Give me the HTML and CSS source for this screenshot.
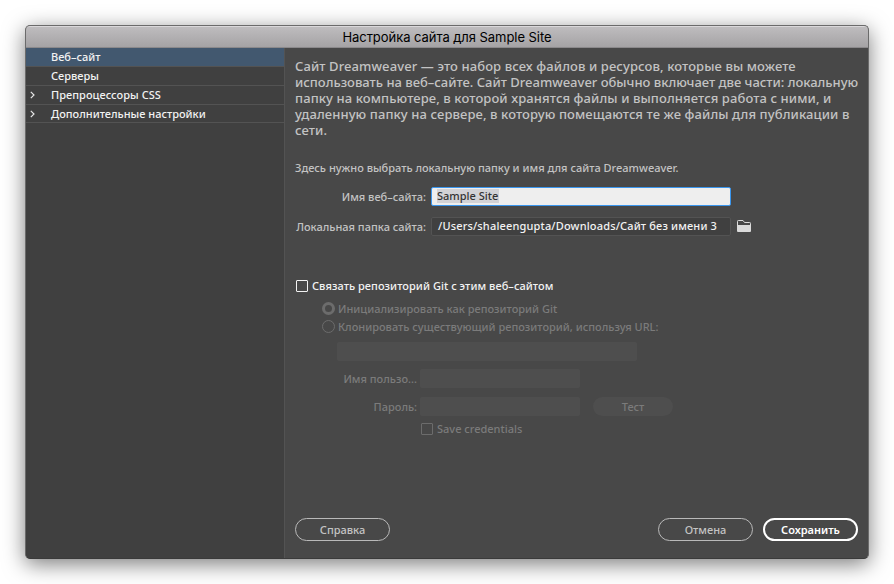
FILE: index.html
```html
<!DOCTYPE html>
<html lang="ru">
<head>
  <meta charset="UTF-8">
  <title>Настройка сайта для Sample Site</title>
  <link rel="stylesheet" href="styles.css">
</head>
<body>
  <div class="window">
    <div class="titlebar"><span class="title">Настройка сайта для Sample Site</span></div>
    <div class="content">
      <ul class="sidebar">
        <li class="active"><span class="arrow"></span><span>Веб–сайт</span></li>
        <li><span class="arrow"></span><span>Серверы</span></li>
        <li>
          <span class="arrow"><svg width="5" height="8" viewBox="0 0 5 8"><path d="M0.8 0.8L4 4L0.8 7.2"/></svg></span>
          <span class="nav-css">Препроцессоры CSS</span>
        </li>
        <li class="last">
          <span class="arrow"><svg width="5" height="8" viewBox="0 0 5 8"><path d="M0.8 0.8L4 4L0.8 7.2"/></svg></span>
          <span>Дополнительные настройки</span>
        </li>
      </ul>
      <div class="main">
        <p class="intro">Сайт Dreamweaver — это набор всех файлов и ресурсов, которые вы можете<br><span class="tight">использовать на веб–сайте. Сайт Dreamweaver обычно включает две части: локальную</span><br>папку на компьютере, в которой хранятся файлы и выполняется работа с ними, и<br>удаленную папку на сервере, в которую помещаются те же файлы для публикации в<br>сети.</p>
        <p class="hint">Здесь нужно выбрать локальную папку и имя для сайта Dreamweaver.</p>

        <div class="row site-name">
          <label>Имя веб–сайта:</label>
          <div class="field focused"><span class="selection">Sample Site</span></div>
        </div>
        <div class="row site-folder">
          <label>Локальная папка сайта:</label>
          <div class="field path"><span>/Users/shaleengupta/Downloads/Сайт без имени 3</span></div>
          <svg class="folder" width="14" height="12" viewBox="0 0 14 12">
            <path class="folder-back" d="M0.5 5V1.3Q0.5 0.5 1.3 0.5H6L7.5 2.5H12.7Q13.5 2.5 13.5 3.3V5"/>
            <path class="folder-front" d="M0 5H14V11Q14 12 13 12H1Q0 12 0 11Z"/>
          </svg>
        </div>

        <div class="git-check"><span class="checkbox"></span><span class="label">Связать репозиторий Git с этим веб–сайтом</span></div>

        <div class="git">
          <div class="radio-row"><span class="radio checked"></span><span class="label">Инициализировать как репозиторий Git</span></div>
          <div class="radio-row"><span class="radio"></span><span class="label">Клонировать существующий репозиторий, используя URL:</span></div>
          <div class="field url"></div>
          <div class="row user">
            <label>Имя пользо...</label>
            <div class="field short"></div>
          </div>
          <div class="row password">
            <label>Пароль:</label>
            <div class="field short"></div>
            <div class="test">Тест</div>
          </div>
          <div class="save-check"><span class="checkbox"></span><span class="label">Save credentials</span></div>
        </div>

        <div class="footer">
          <button class="help">Справка</button>
          <button class="cancel">Отмена</button>
          <button class="save">Сохранить</button>
        </div>
      </div>
    </div>
  </div>
</body>
</html>
```
FILE: styles.css
```css
* {
  box-sizing: border-box;
}

body {
  margin: 0;
  padding: 25px;
  height: 584px;
  overflow: hidden;
  background: #fff;
  font-family: 'Noto Sans', 'Open Sans', sans-serif;
  font-size: 11px;
  font-weight: 500;
  white-space: nowrap;
}

.window {
  display: flex;
  flex-direction: column;
  width: 844px;
  height: 534px;
  border: 1px solid #6b6b6b;
  border-bottom-color: #3a3a3a;
  border-radius: 5px;
  overflow: hidden;
  background: #484848;
  box-shadow: 0 5px 21px rgba(0, 0, 0, 0.52);
}

.titlebar {
  height: 22px;
  flex: none;
  border-top: 1px solid #dad8da;
  border-bottom: 1px solid #8b898b;
  background: linear-gradient(#bebcbe, #a5a3a5);
  text-align: center;
  color: #000;
  font: 13px/21px Inter, Roboto, sans-serif;
  letter-spacing: -0.05px;
}

.content {
  display: flex;
  flex: 1;
}

/* sidebar */
.sidebar {
  width: 259px;
  flex: none;
  margin: 0;
  padding: 0;
  list-style: none;
  background: #404040;
  border-right: 1px solid #535353;
  color: #f2f2f2;
}

.sidebar li {
  display: flex;
  align-items: center;
  height: 19px;
  padding-bottom: 1px;
  border-bottom: 1px solid #535353;
}

.sidebar li.last {
  height: 18px;
  padding-bottom: 0;
}

.sidebar li.active {
  background: #42586f;
}

.nav-css {
  letter-spacing: 0.04px;
}

.arrow {
  display: flex;
  width: 25px;
  padding-left: 4px;
}

.arrow path {
  fill: none;
  stroke: #e6e6e6;
  stroke-width: 1.2;
}

/* main panel */
.main {
  display: flex;
  flex-direction: column;
  flex: 1;
  min-width: 0;
  padding: 10px 10px 17px;
  color: #c3c3c3;
}

.intro {
  margin: 0;
  font-size: 13px;
  line-height: 16px;
  letter-spacing: 0.1px;
}

.intro .tight {
  letter-spacing: -0.01px;
}

.hint {
  margin: 22px 0 0;
  line-height: 16px;
}

.row {
  display: flex;
  align-items: center;
  height: 19px;
}

.row label {
  text-align: right;
}

.site-name {
  margin-top: 11px;
}

.site-folder {
  margin-top: 11px;
}

.site-name label,
.site-folder label {
  width: 131px;
  margin-right: 5px;
}

.field {
  width: 300px;
  height: 19px;
  border: 1px solid #535353;
  border-radius: 2px;
  background: #404040;
  color: #f2f2f2;
  line-height: 15px;
}

.focused {
  padding: 1px 0 0 5px;
  border-color: #3a96ee;
  background: #eee;
  color: #333;
}

.selection {
  display: block;
  width: 62px;
  height: 14px;
  line-height: 14px;
  background: #d2d2d6;
}

.path {
  padding-left: 6px;
  letter-spacing: 0.16px;
}

.folder {
  margin: 0 0 2px 6px;
}

.folder-back {
  fill: none;
  stroke: #dadada;
}

.folder-front {
  fill: #dadada;
}

.checkbox {
  width: 12px;
  height: 12px;
  border: 1px solid #f2f2f2;
  border-radius: 1px;
}

.label {
  padding-bottom: 2px;
}

.git-check {
  display: flex;
  align-items: center;
  gap: 4px;
  height: 18px;
  margin: 41px 0 0 1px;
  color: #f2f2f2;
  letter-spacing: 0.05px;
}

/* disabled git options */
.git {
  margin-top: 4px;
  color: #7b7b7b;
}

.radio-row {
  display: flex;
  align-items: center;
  gap: 3px;
  height: 18px;
  margin-left: 27px;
}

.radio-row .label {
  padding-bottom: 0;
}

.radio {
  width: 13px;
  height: 13px;
  border: 1px solid #6c6c6c;
  border-radius: 50%;
}

.radio.checked {
  border-width: 3px;
}

.git .field {
  border: 0;
  background: #4e4e4e;
}

.git .url {
  margin: 7px 0 0 42px;
}

.git .short {
  width: 160px;
}

.git .row label {
  width: 122px;
  margin-right: 3px;
}

.user {
  margin-top: 8px;
}

.password {
  margin-top: 9px;
}

.test {
  width: 80px;
  height: 19px;
  margin-left: 13px;
  border-radius: 10px;
  background: #4e4e4e;
  line-height: 19px;
  text-align: center;
}

.save-check {
  display: flex;
  align-items: center;
  gap: 4px;
  height: 18px;
  margin: 4px 0 0 126px;
}

.git .checkbox {
  border-color: #6c6c6c;
}

.footer {
  display: flex;
  margin-top: auto;
}

button {
  width: 95px;
  height: 23px;
  padding: 0;
  border: 1px solid #b9b9b9;
  border-radius: 12px;
  background: none;
  color: #c3c3c3;
  font: inherit;
}

.cancel {
  margin-left: auto;
}

.save {
  margin-left: 10px;
  border: 2px solid #fff;
  color: #fff;
  font-weight: 600;
}
```
